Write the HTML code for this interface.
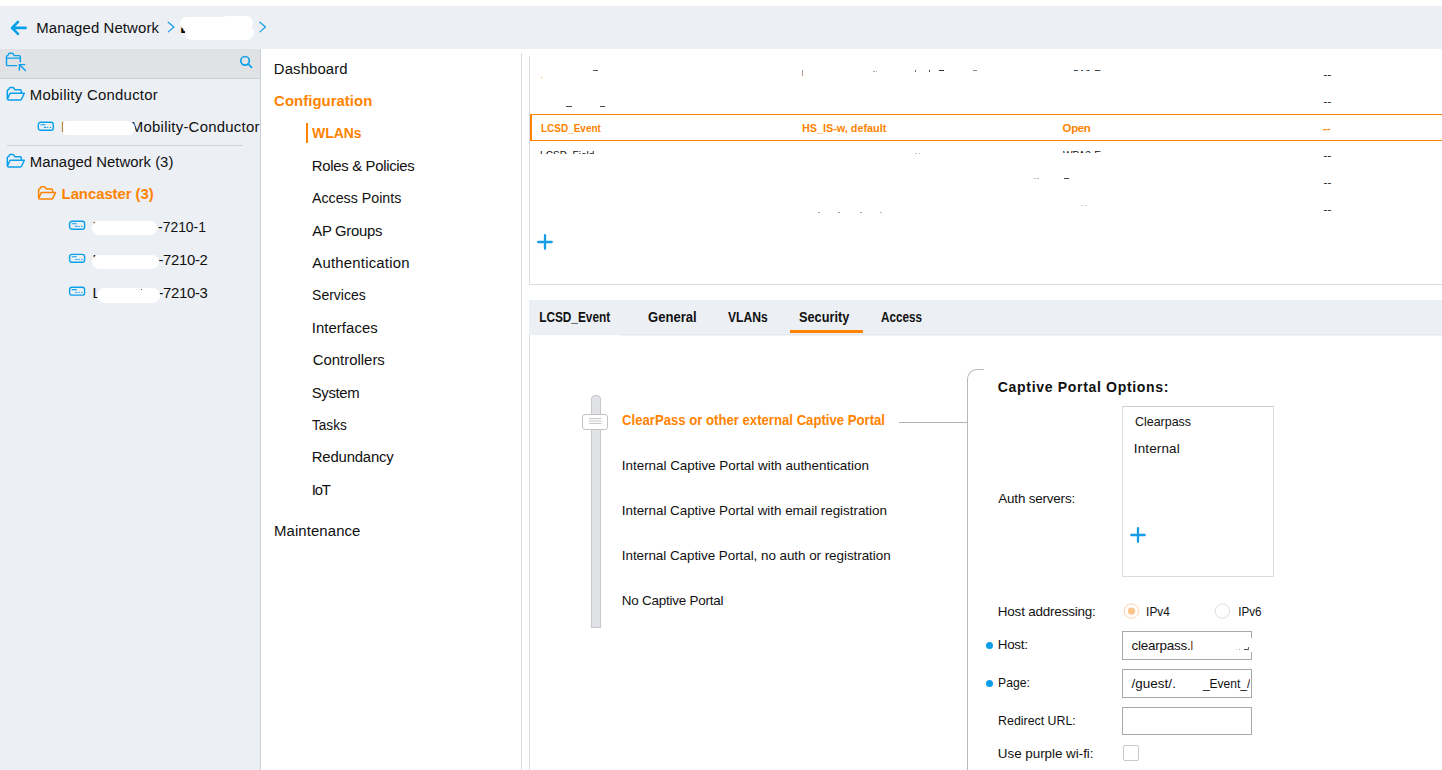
<!DOCTYPE html>
<html lang="en">
<head>
<meta charset="utf-8">
<title>Managed Network - WLANs</title>
<style>
html,body{margin:0;padding:0;}
body{width:1442px;height:770px;overflow:hidden;background:#fff;position:relative;font-family:"Liberation Sans",sans-serif;}
.abs,.t,svg{position:absolute;}
.t{white-space:pre;line-height:20px;font-family:"Liberation Sans",sans-serif;}
.blob{position:absolute;background:#fff;border-radius:7px;}
.inp{position:absolute;box-sizing:border-box;border:1px solid #a9a9a9;background:#fff;}
</style>
</head>
<body>
<!-- header -->
<div class="abs" id="hdr" style="left:0;top:6px;width:1442px;height:43px;background:#eceff4"></div>
<!-- sidebar -->
<div class="abs" id="side" style="left:0;top:49px;width:260px;height:721px;background:#eceff4"></div>
<div class="abs" style="left:260px;top:49px;width:1px;height:721px;background:#cdd0d6"></div>
<div class="abs" id="tool" style="left:0;top:49px;width:260px;height:29px;background:#e1e2e6"></div>
<div class="abs" style="left:0;top:78px;width:260px;height:1px;background:#cbccd1"></div>
<div class="abs" style="left:7px;top:145px;width:236px;height:1px;background:#d2d3d8"></div>
<!-- nav border -->
<div class="abs" style="left:521px;top:53px;width:1px;height:717px;background:#dcdcdc"></div>
<!-- WLANs active bar -->
<div class="abs" style="left:306px;top:123px;width:2px;height:20px;background:#ff8300"></div>

<!-- table box -->
<div class="abs" style="left:529px;top:56px;width:930px;height:228px;border:1px solid #dcdcdc;border-top:none;box-sizing:content-box"></div>
<div class="abs" style="left:530px;top:114px;width:930px;height:25px;border:1px solid #ff8300;border-left-width:2px"></div>

<!-- tab bar & lower box -->
<div class="abs" style="left:529px;top:300px;width:1px;height:470px;background:#dcdcdc"></div>
<div class="abs" style="left:529px;top:300px;width:913px;height:34.5px;background:#eceff4"></div><svg style="left:529px;top:330px" width="913" height="8" viewBox="529 330 913 8"><rect x="529" y="334" width="913" height="0.5" fill="#eceff4"/><rect x="620" y="334.5" width="822" height="1" fill="#e3e5ea"/></svg>
<div class="abs" style="left:790px;top:330px;width:73px;height:3px;background:#ff8300"></div>

<!-- slider -->
<div class="abs" style="left:591px;top:395px;width:10px;height:233px;box-sizing:border-box;background:#e1e2e6;border:1px solid #c6c7cc;border-radius:4px 4px 0 0"></div>
<div class="abs" style="left:582px;top:414px;width:26px;height:16px;box-sizing:border-box;background:#fff;border:1px solid #c4c4c4;border-radius:3px"></div>

<svg style="left:582px;top:414px" width="26" height="16" viewBox="582 414 26 16" stroke="#c4c4c4" stroke-width="1"><path d="M589 418.6H601.5M589 421H601.5M589 423.4H601.5"/></svg>
<!-- connector & bracket -->
<div class="abs" style="left:899px;top:422px;width:68px;height:1px;background:#b4b4b4"></div>
<div class="abs" style="left:967px;top:369px;width:40px;height:420px;box-sizing:border-box;border-left:1px solid #b6b8bc;border-top:1px solid #b6b8bc;border-top-left-radius:10px;"></div>
<div class="abs" style="left:984px;top:368px;width:30px;height:4px;background:#fff"></div>

<!-- list box -->
<div class="abs" style="left:1122px;top:406px;width:152px;height:171px;box-sizing:border-box;border:1px solid #dcdcdc;border-top-color:#cfcfcf;background:#fff"></div>

<!-- radios -->
<svg style="left:1118px;top:600px" width="120" height="24" viewBox="1118 600 120 24" fill="none"><circle cx="1131.4" cy="611.1" r="7.2" fill="#fff" stroke="#fbd3af" stroke-width="1"/><circle cx="1131.5" cy="611.1" r="3.7" fill="#fdc48c"/><circle cx="1222.4" cy="611.1" r="7.2" fill="#fff" stroke="#dddddd" stroke-width="1"/></svg>
<!-- required dots -->
<div class="abs" style="left:986px;top:642px;width:7px;height:7px;border-radius:50%;background:#0d9eea"></div>
<div class="abs" style="left:986px;top:680px;width:7px;height:7px;border-radius:50%;background:#0d9eea"></div>

<!-- inputs -->
<div class="inp" style="left:1122px;top:631px;width:130px;height:29px"></div>
<div class="inp" style="left:1122px;top:669px;width:130px;height:29px"></div>
<div class="inp" style="left:1122px;top:707px;width:130px;height:28px"></div>
<div class="abs" style="left:1123px;top:745px;width:16px;height:16px;box-sizing:border-box;border:1px solid #c8c8c8;border-radius:2px;background:#fff"></div>

<svg style="left:0;top:6px" width="40" height="43" viewBox="0 6 40 43" fill="none" stroke="#02a0e9" stroke-width="2.6" stroke-linecap="round" stroke-linejoin="round"><path d="M25.6 27.9H12.4M18.0 21.9L12.0 27.9L18.0 33.9"/></svg>
<svg style="left:160px;top:12px" width="120" height="32" viewBox="160 12 120 32" fill="none" stroke="#1a9fe8" stroke-width="1.25" stroke-linecap="round" stroke-linejoin="round"><path d="M168.2 22.2L173.9 27L168.2 31.9"/><path d="M259.9 22.2L265.5 27L259.9 31.9"/></svg>
<svg style="left:0;top:49px" width="40" height="29" viewBox="0 49 40 29" fill="none" stroke="#0aa0ea" stroke-width="1.45" stroke-linecap="round" stroke-linejoin="round">
<path d="M20.3 61.8V56.6Q20.3 55.6 19.3 55.6H14.6Q13.9 55.6 13.6 54.6Q13.2 53.2 12.2 53.2H9.8Q8.8 53.2 8.5 54.4Q8.2 55.6 7.5 55.6Q6.5 55.6 6.5 56.6V64.4Q6.5 65.6 7.7 65.6H16.6"/>
<path d="M6.5 58.1H20.3"/><path d="M24.7 64.6H19.4V70"/><path d="M19.6 64.8L25.4 70.5"/></svg>
<svg style="left:230px;top:50px" width="30" height="26" viewBox="230 50 30 26" fill="none" stroke="#0aa0ea" stroke-width="1.7" stroke-linecap="round"><circle cx="245.05" cy="60.8" r="4.3"/><path d="M248.3 64L251.5 67.3"/></svg>
<svg style="left:0px;top:82px" width="30" height="24" viewBox="0 82 30 24" fill="none" stroke="#0aa0ea" stroke-width="1.5" stroke-linecap="round" stroke-linejoin="round">
<path d="M21.3 92.7V90.9Q21.3 89.8 20.2 89.8H15.3Q14.5 89.8 14.2 88.7Q13.9 87.6 12.9 87.6H10.3Q9.4 87.6 9.1 88.7Q8.8 89.8 8.1 89.8Q7.3 89.9 7.3 90.9V98.6Q7.3 99.9 8.6 99.9H20.4Q21.2 99.9 21.6 99L24.3 93.3H10.6Q10 93.3 9.7 94L7.5 98.9"/></svg>
<svg style="left:0px;top:149px" width="30" height="24" viewBox="0 82 30 24" fill="none" stroke="#0aa0ea" stroke-width="1.5" stroke-linecap="round" stroke-linejoin="round">
<path d="M21.3 92.7V90.9Q21.3 89.8 20.2 89.8H15.3Q14.5 89.8 14.2 88.7Q13.9 87.6 12.9 87.6H10.3Q9.4 87.6 9.1 88.7Q8.8 89.8 8.1 89.8Q7.3 89.9 7.3 90.9V98.6Q7.3 99.9 8.6 99.9H20.4Q21.2 99.9 21.6 99L24.3 93.3H10.6Q10 93.3 9.7 94L7.5 98.9"/></svg>
<svg style="left:31px;top:181px" width="30" height="24" viewBox="-0.3 81.9 30 24" fill="none" stroke="#ff8300" stroke-width="1.5" stroke-linecap="round" stroke-linejoin="round">
<path d="M21.3 92.7V90.9Q21.3 89.8 20.2 89.8H15.3Q14.5 89.8 14.2 88.7Q13.9 87.6 12.9 87.6H10.3Q9.4 87.6 9.1 88.7Q8.8 89.8 8.1 89.8Q7.3 89.9 7.3 90.9V98.6Q7.3 99.9 8.6 99.9H20.4Q21.2 99.9 21.6 99L24.3 93.3H10.6Q10 93.3 9.7 94L7.5 98.9"/></svg>
<svg style="left:37px;top:121px" width="19" height="12" viewBox="0 0 19 12" fill="none" stroke="#0aa0ea" stroke-linecap="round"><g transform="translate(0.6,0.6)">
<rect x="0.7" y="0.7" width="15" height="7.9" rx="2.2" stroke-width="1.4"/>
<path d="M3.2 3.1H7.4" stroke-width="1.1"/><path d="M6.9 5.8H8.1" stroke-width="1.1"/><path d="M10.1 5.8H10.2" stroke-width="1.3"/><path d="M12.9 5.8H13" stroke-width="1.3"/></g></svg>
<svg style="left:68px;top:220px" width="19" height="12" viewBox="0 0 19 12" fill="none" stroke="#0aa0ea" stroke-linecap="round"><g transform="translate(0.9,0.6)">
<rect x="0.7" y="0.7" width="15" height="7.9" rx="2.2" stroke-width="1.4"/>
<path d="M3.2 3.1H7.4" stroke-width="1.1"/><path d="M6.9 5.8H8.1" stroke-width="1.1"/><path d="M10.1 5.8H10.2" stroke-width="1.3"/><path d="M12.9 5.8H13" stroke-width="1.3"/></g></svg>
<svg style="left:68px;top:253px" width="19" height="12" viewBox="0 0 19 12" fill="none" stroke="#0aa0ea" stroke-linecap="round"><g transform="translate(0.9,0.7)">
<rect x="0.7" y="0.7" width="15" height="7.9" rx="2.2" stroke-width="1.4"/>
<path d="M3.2 3.1H7.4" stroke-width="1.1"/><path d="M6.9 5.8H8.1" stroke-width="1.1"/><path d="M10.1 5.8H10.2" stroke-width="1.3"/><path d="M12.9 5.8H13" stroke-width="1.3"/></g></svg>
<svg style="left:68px;top:286px" width="19" height="12" viewBox="0 0 19 12" fill="none" stroke="#0aa0ea" stroke-linecap="round"><g transform="translate(0.9,0.5)">
<rect x="0.7" y="0.7" width="15" height="7.9" rx="2.2" stroke-width="1.4"/>
<path d="M3.2 3.1H7.4" stroke-width="1.1"/><path d="M6.9 5.8H8.1" stroke-width="1.1"/><path d="M10.1 5.8H10.2" stroke-width="1.3"/><path d="M12.9 5.8H13" stroke-width="1.3"/></g></svg>
<svg style="left:535px;top:232.1px" width="20" height="20" viewBox="535 232.1 20 20" stroke="#169de8" stroke-width="2.3" stroke-linecap="round"><path d="M538.25 242.1H551.75M545 235.35V248.85"/></svg>
<svg style="left:1128.2px;top:525px" width="20" height="20" viewBox="1128.2 525 20 20" stroke="#169de8" stroke-width="2.3" stroke-linecap="round"><path d="M1131.45 535H1144.95M1138.2 528.25V541.75"/></svg>

<span class="t" style="left:36.30px;top:17.75px;font-size:14.9px;font-weight:400;color:#111;letter-spacing:0.129px">Managed Network</span>
<span class="t" style="left:29.80px;top:85.10px;font-size:14.9px;font-weight:400;color:#111;letter-spacing:0.276px">Mobility Conductor</span>
<span class="t" style="left:130.80px;top:117.10px;font-size:14.9px;font-weight:400;color:#111;letter-spacing:0.265px">Mobility-Conductor</span>
<span class="t" style="left:29.80px;top:151.90px;font-size:14.9px;font-weight:400;color:#111;letter-spacing:0.022px">Managed Network (3)</span>
<span class="t" style="left:61.60px;top:183.90px;font-size:14.9px;font-weight:700;color:#ff8300;letter-spacing:-0.050px">Lancaster (3)</span>
<span class="t" style="left:158.30px;top:217.20px;font-size:14.9px;font-weight:400;color:#111;transform:scaleX(0.9353);transform-origin:0px 0">-7210-1</span>
<span class="t" style="left:158.40px;top:250.00px;font-size:14.9px;font-weight:400;color:#111;letter-spacing:-0.317px">-7210-2</span>
<span class="t" style="left:158.40px;top:282.80px;font-size:14.9px;font-weight:400;color:#111;letter-spacing:-0.317px">-7210-3</span>
<span class="t" style="left:273.80px;top:59.00px;font-size:14.9px;font-weight:400;color:#111;letter-spacing:0.125px">Dashboard</span>
<span class="t" style="left:274.10px;top:90.80px;font-size:14.9px;font-weight:700;color:#ff8300;letter-spacing:0.050px">Configuration</span>
<span class="t" style="left:312.00px;top:122.60px;font-size:14.9px;font-weight:700;color:#ff8300;transform:scaleX(0.9358);transform-origin:0px 0">WLANs</span>
<span class="t" style="left:311.80px;top:155.80px;font-size:14.9px;font-weight:400;color:#111;letter-spacing:-0.313px">Roles &amp; Policies</span>
<span class="t" style="left:312.30px;top:187.80px;font-size:14.9px;font-weight:400;color:#111;transform:scaleX(0.9548);transform-origin:0px 0">Access Points</span>
<span class="t" style="left:312.30px;top:220.60px;font-size:14.9px;font-weight:400;color:#111;letter-spacing:-0.312px">AP Groups</span>
<span class="t" style="left:312.30px;top:252.60px;font-size:14.9px;font-weight:400;color:#111;letter-spacing:0.215px">Authentication</span>
<span class="t" style="left:311.80px;top:284.80px;font-size:14.9px;font-weight:400;color:#111;transform:scaleX(0.9411);transform-origin:1px 0">Services</span>
<span class="t" style="left:311.80px;top:317.80px;font-size:14.9px;font-weight:400;color:#111;letter-spacing:0.056px">Interfaces</span>
<span class="t" style="left:312.80px;top:349.90px;font-size:14.9px;font-weight:400;color:#111;letter-spacing:0.000px">Controllers</span>
<span class="t" style="left:311.80px;top:382.60px;font-size:14.9px;font-weight:400;color:#111;letter-spacing:-0.380px">System</span>
<span class="t" style="left:312.30px;top:414.80px;font-size:14.9px;font-weight:400;color:#111;transform:scaleX(0.9132);transform-origin:0px 0">Tasks</span>
<span class="t" style="left:311.80px;top:447.10px;font-size:14.9px;font-weight:400;color:#111;letter-spacing:-0.189px">Redundancy</span>
<span class="t" style="left:311.80px;top:479.90px;font-size:14.9px;font-weight:400;color:#111;letter-spacing:-1.200px">IoT</span>
<span class="t" style="left:274.00px;top:521.10px;font-size:14.9px;font-weight:400;color:#111;letter-spacing:0.110px">Maintenance</span>
<span class="t" style="left:540.60px;top:117.80px;font-size:11.38px;font-weight:700;color:#ff8300;transform:scaleX(0.8768);transform-origin:0px 0">LCSD_Event</span>
<span class="t" style="left:801.70px;top:117.80px;font-size:11.38px;font-weight:700;color:#ff8300;transform:scaleX(0.9506);transform-origin:0px 0">HS_IS-w, default</span>
<span class="t" style="left:1062.60px;top:117.60px;font-size:11.38px;font-weight:700;color:#ff8300;letter-spacing:-0.300px">Open</span>
<span class="t" style="left:1323.60px;top:64.00px;font-size:11.38px;font-weight:400;color:#111;letter-spacing:0.000px">--</span>
<span class="t" style="left:1323.60px;top:91.00px;font-size:11.38px;font-weight:400;color:#111;letter-spacing:0.000px">--</span>
<span class="t" style="left:1322.90px;top:117.70px;font-size:11.38px;font-weight:700;color:#ff8300;letter-spacing:0.000px">--</span>
<span class="t" style="left:1323.60px;top:145.00px;font-size:11.38px;font-weight:400;color:#111;letter-spacing:0.000px">--</span>
<span class="t" style="left:1323.60px;top:172.00px;font-size:11.38px;font-weight:400;color:#111;letter-spacing:0.000px">--</span>
<span class="t" style="left:1323.60px;top:199.00px;font-size:11.38px;font-weight:400;color:#111;letter-spacing:0.000px">--</span>
<span class="t" style="left:539.10px;top:306.70px;font-size:14.08px;font-weight:700;color:#111;transform:scaleX(0.8405);transform-origin:1px 0">LCSD_Event</span>
<span class="t" style="left:648.30px;top:306.60px;font-size:14.08px;font-weight:700;color:#111;transform:scaleX(0.9288);transform-origin:0px 0">General</span>
<span class="t" style="left:728.30px;top:306.60px;font-size:14.08px;font-weight:700;color:#111;transform:scaleX(0.8609);transform-origin:0px 0">VLANs</span>
<span class="t" style="left:799.10px;top:306.60px;font-size:14.08px;font-weight:700;color:#111;transform:scaleX(0.9054);transform-origin:0px 0">Security</span>
<span class="t" style="left:881.30px;top:306.60px;font-size:14.08px;font-weight:700;color:#111;transform:scaleX(0.8327);transform-origin:0px 0">Access</span>
<span class="t" style="left:622.00px;top:409.70px;font-size:14.08px;font-weight:700;color:#ff8300;transform:scaleX(0.9338);transform-origin:0px 0">ClearPass or other external Captive Portal</span>
<span class="t" style="left:621.80px;top:456.00px;font-size:13.45px;font-weight:400;color:#111;letter-spacing:-0.021px">Internal Captive Portal with authentication</span>
<span class="t" style="left:621.80px;top:500.90px;font-size:13.45px;font-weight:400;color:#111;letter-spacing:-0.033px">Internal Captive Portal with email registration</span>
<span class="t" style="left:621.80px;top:545.80px;font-size:13.45px;font-weight:400;color:#111;letter-spacing:-0.049px">Internal Captive Portal, no auth or registration</span>
<span class="t" style="left:621.80px;top:590.80px;font-size:13.45px;font-weight:400;color:#111;letter-spacing:-0.219px">No Captive Portal</span>
<span class="t" style="left:997.80px;top:376.80px;font-size:14.08px;font-weight:700;color:#111;letter-spacing:0.645px">Captive Portal Options:</span>
<span class="t" style="left:998.30px;top:489.00px;font-size:13.45px;font-weight:400;color:#111;letter-spacing:-0.192px">Auth servers:</span>
<span class="t" style="left:1134.80px;top:412.20px;font-size:13.45px;font-weight:400;color:#111;transform:scaleX(0.9267);transform-origin:0px 0">Clearpass</span>
<span class="t" style="left:1133.80px;top:439.10px;font-size:13.45px;font-weight:400;color:#111;letter-spacing:0.157px">Internal</span>
<span class="t" style="left:997.80px;top:601.90px;font-size:13.45px;font-weight:400;color:#111;letter-spacing:-0.187px">Host addressing:</span>
<span class="t" style="left:1146.30px;top:601.90px;font-size:13.45px;font-weight:400;color:#111;transform:scaleX(0.8808);transform-origin:1px 0">IPv4</span>
<span class="t" style="left:1237.50px;top:601.90px;font-size:13.45px;font-weight:400;color:#111;transform:scaleX(0.8692);transform-origin:1px 0">IPv6</span>
<span class="t" style="left:997.80px;top:635.20px;font-size:13.45px;font-weight:400;color:#111;letter-spacing:-0.300px">Host:</span>
<span class="t" style="left:1131.60px;top:635.80px;font-size:13.45px;font-weight:400;color:#111;letter-spacing:-0.240px">clearpass.l</span>
<span class="t" style="left:997.80px;top:673.20px;font-size:13.45px;font-weight:400;color:#111;transform:scaleX(0.9061);transform-origin:1px 0">Page:</span>
<span class="t" style="left:1131.60px;top:673.60px;font-size:13.45px;font-weight:400;color:#111;letter-spacing:0.029px">/guest/.</span>
<div class="abs" style="left:1198px;top:671px;width:51.80px;height:26.00px;overflow:hidden"><span class="t" style="left:5.40px;top:2.60px;font-size:13.45px;font-weight:400;color:#111;letter-spacing:0.000px;transform:scaleX(0.8944);transform-origin:-1px 0">_Event_/</span></div>
<span class="t" style="left:997.80px;top:711.00px;font-size:13.45px;font-weight:400;color:#111;transform:scaleX(0.9205);transform-origin:1px 0">Redirect URL:</span>
<span class="t" style="left:997.80px;top:744.00px;font-size:13.45px;font-weight:400;color:#111;letter-spacing:-0.037px">Use purple wi-fi:</span>
<div class="abs" style="left:536px;top:146px;width:64.00px;height:8.40px;overflow:hidden"><span class="t" style="left:4.30px;top:-1.10px;font-size:11.38px;font-weight:400;color:#111;letter-spacing:0.000px;transform:scaleX(0.8850);transform-origin:1px 0">LCSD_Field</span></div>
<div class="abs" style="left:1058px;top:146px;width:54.00px;height:7.20px;overflow:hidden"><span class="t" style="left:4.80px;top:-1.10px;font-size:11.38px;font-weight:400;color:#111;letter-spacing:0.000px;transform:scaleX(0.8860);transform-origin:0px 0">WPA3-E</span></div>
<div class="abs" style="left:1074px;top:64px;width:38.00px;height:6.80px;overflow:hidden"><span class="t" style="left:-11.20px;top:-0.10px;font-size:11.38px;font-weight:400;color:#111;letter-spacing:0.000px;transform:scaleX(0.8860);transform-origin:0px 0">WPA3-E</span></div>
<span class="t" style="left:180.30px;top:17.90px;font-size:14.9px;font-weight:700;color:#000;letter-spacing:-0.800px">L</span>
<span class="t" style="left:61.00px;top:117.10px;font-size:14.9px;font-weight:400;color:#9c6b40;letter-spacing:-0.500px">L</span>
<span class="t" style="left:92.50px;top:217.20px;font-size:14.9px;font-weight:400;color:#111;letter-spacing:-0.500px">L</span>
<span class="t" style="left:92.50px;top:250.00px;font-size:14.9px;font-weight:400;color:#111;letter-spacing:-0.500px">L</span>
<span class="t" style="left:92.50px;top:282.80px;font-size:14.9px;font-weight:400;color:#111;letter-spacing:-0.500px">L</span>

<div class="blob" style="left:180px;top:16.5px;width:72.5px;height:13px;border-radius:6.5px"></div>
<div class="blob" style="left:222px;top:15.8px;width:30px;height:10px;border-radius:5.0px"></div>
<div class="blob" style="left:184.5px;top:24.5px;width:69.5px;height:15.5px;border-radius:7.8px"></div>
<div class="blob" style="left:62.9px;top:121px;width:71.9px;height:14px;border-radius:3px 7px 7px 3px"></div>
<div class="blob" style="left:92.2px;top:220.9px;width:64.5px;height:13.7px;border-radius:6.8px"></div>
<div class="blob" style="left:92.2px;top:254.5px;width:66.4px;height:14.4px;border-radius:7.2px"></div>
<div class="blob" style="left:96.9px;top:287.6px;width:62.9px;height:15.6px;border-radius:7.8px"></div>
<div class="abs" style="left:1250px;top:637.5px;width:3px;height:14.5px;background:#fff"></div>
<div class="abs" style="left:593.3px;top:70px;width:5.2px;height:1px;background:#556"></div>
<div class="abs" style="left:541.3px;top:77.3px;width:1px;height:1px;background:#fa3"></div>
<div class="abs" style="left:802px;top:70px;width:1.2px;height:6px;background:#b98"></div>
<div class="abs" style="left:873px;top:71px;width:1.5px;height:1px;background:#aab"></div>
<div class="abs" style="left:875.5px;top:71px;width:1.5px;height:1px;background:#aab"></div>
<div class="abs" style="left:915px;top:70px;width:1px;height:1.5px;background:#667"></div>
<div class="abs" style="left:929px;top:70px;width:1px;height:1.5px;background:#445"></div>
<div class="abs" style="left:938.5px;top:70px;width:5px;height:1.2px;background:#334"></div>
<div class="abs" style="left:973px;top:70.4px;width:4px;height:1px;background:#889"></div>
<div class="abs" style="left:566.2px;top:106px;width:5.4px;height:1px;background:#445"></div>
<div class="abs" style="left:600px;top:106px;width:5.2px;height:1px;background:#445"></div>
<div class="abs" style="left:915px;top:153px;width:1.5px;height:1px;background:#bbc"></div>
<div class="abs" style="left:918.5px;top:153px;width:1.5px;height:1px;background:#bbc"></div>
<div class="abs" style="left:1064px;top:178px;width:5px;height:1px;background:#445"></div>
<div class="abs" style="left:1034px;top:178px;width:1.5px;height:1px;background:#bbb"></div>
<div class="abs" style="left:1037px;top:178px;width:1.5px;height:1px;background:#bbb"></div>
<div class="abs" style="left:1080.5px;top:205px;width:2px;height:1px;background:#ccd"></div>
<div class="abs" style="left:1085px;top:205px;width:2px;height:1px;background:#ccd"></div>
<div class="abs" style="left:818px;top:212px;width:1.5px;height:1px;background:#aaa"></div>
<div class="abs" style="left:838px;top:212px;width:1.5px;height:1px;background:#999"></div>
<div class="abs" style="left:860px;top:212px;width:1.5px;height:1px;background:#aaa"></div>
<div class="abs" style="left:880px;top:212px;width:1.5px;height:1px;background:#bbb"></div>
<div class="abs" style="left:1236.2px;top:648.6px;width:1px;height:1px;background:#bcd"></div>
<div class="abs" style="left:1238.5px;top:648.6px;width:1px;height:1px;background:#9ab"></div>
<div class="abs" style="left:1244.2px;top:649.3px;width:3.5px;height:1px;background:#445"></div>
<div class="abs" style="left:1247.6px;top:646.5px;width:1px;height:3px;background:#667"></div>
<div class="abs" style="left:141.4px;top:288.6px;width:1px;height:1.5px;background:#556"></div>
<div class="abs" style="left:1192px;top:638px;width:3px;height:14px;background:rgba(255,255,255,.5)"></div>
</body>
</html>
